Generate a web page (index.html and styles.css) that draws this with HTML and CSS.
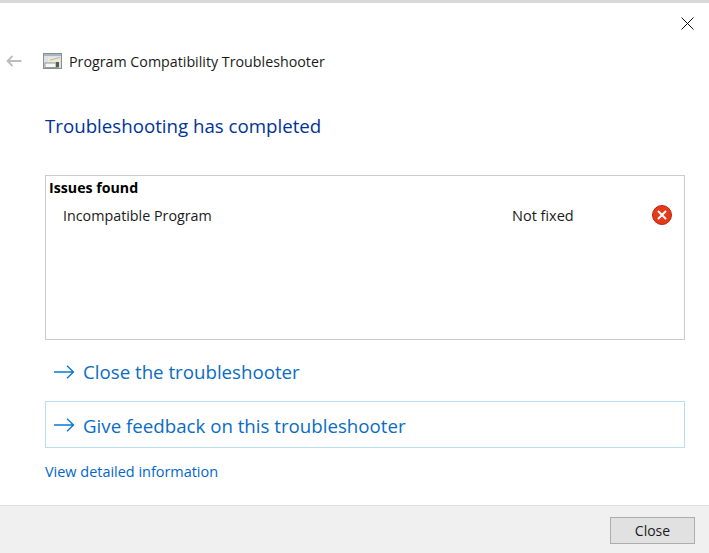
FILE: index.html
```html
<!DOCTYPE html>
<html lang="en">
<head>
    <meta charset="UTF-8">
    <title>Program Compatibility Troubleshooter</title>
    <link rel="stylesheet" href="styles.css">
</head>
<body>
    <div class="window">
        <div class="topbar">
            <svg class="close-x" width="13" height="13" viewBox="0 0 13 13"><path d="M0.5 0.5L12.5 12.5M12.5 0.5L0.5 12.5" stroke="#111" stroke-width="1" fill="none"/></svg>
        </div>
        <div class="titlebar">
            <svg class="back" width="16" height="12" viewBox="0 0 16 12"><path d="M15.5 6H1.5M6.5 1L1.5 6L6.5 11" stroke="#bcbcbc" stroke-width="1.8" fill="none"/></svg>
            <svg class="app-icon" width="19" height="16" viewBox="0 0 19 16">
                <rect x="0.5" y="0.5" width="18" height="15" fill="#dde1e8" stroke="#8d8d8d"/>
                <rect x="1" y="1" width="17" height="2" fill="#a9b4c6"/>
                <path d="M5 4H17V9H5Z" fill="#efe9d2"/>
                <path d="M7 7L17 4.5" stroke="#b4b9c4" stroke-width="1.2"/>
                <rect x="2" y="10" width="11" height="4.5" fill="#f7f7f7" stroke="#7d8a7f" stroke-width="0.8"/>
                <rect x="13" y="9" width="3" height="5.5" fill="#5a5f4c"/>
            </svg>
            <span class="app-name">Program Compatibility Troubleshooter</span>
        </div>
        <main class="content">
            <h1>Troubleshooting has completed</h1>
            <section class="issues">
                <div class="issues-head">Issues found</div>
                <div class="issue-row">
                    <span class="issue-name">Incompatible Program</span>
                    <span class="issue-status">Not fixed</span>
                    <svg class="issue-icon" width="20" height="20" viewBox="0 0 20 20">
                        <circle cx="10" cy="10" r="9.5" fill="#e5391a" stroke="#b5280f" stroke-width="1"/>
                        <path d="M6 6L14 14M14 6L6 14" stroke="#fff" stroke-width="2" fill="none"/>
                    </svg>
                </div>
            </section>
            <a class="task" href="#">
                <svg width="21" height="14" viewBox="0 0 21 14"><path d="M0 7H19.5M13 0.7L19.5 7L13 13.3" stroke="#0a78d7" stroke-width="1.4" fill="none"/></svg>
                Close the troubleshooter
            </a>
            <a class="task task-focus" href="#">
                <svg width="21" height="14" viewBox="0 0 21 14"><path d="M0 7H19.5M13 0.7L19.5 7L13 13.3" stroke="#0a78d7" stroke-width="1.4" fill="none"/></svg>
                Give feedback on this troubleshooter
            </a>
            <a class="details" href="#">View detailed information</a>
        </main>
        <footer class="footer">
            <button class="close-btn">Close</button>
        </footer>
    </div>
</body>
</html>
```

FILE: styles.css
```css
body {
    margin: 0;
    font-family: "Open Sans", "Noto Sans", sans-serif;
    background: #fff;
    overflow: hidden;
}
.window {
    height: 553px;
    display: flex;
    flex-direction: column;
    border-top: 3px solid #d9d9d9;
    box-sizing: border-box;
}
.topbar {
    height: 39px;
    display: flex;
    justify-content: flex-end;
    align-items: flex-start;
    padding: 14px 15px 0 0;
    box-sizing: border-box;
}
.titlebar {
    height: 38px;
    display: flex;
    align-items: center;
    padding-left: 6px;
}
.back {
    margin-right: 21px;
}
.app-icon {
    margin-right: 7px;
}
.app-name {
    font-size: 14.25px;
    color: #1a1a1a;
}
.content {
    flex: 1;
    padding: 0 24px 0 45px;
}
h1 {
    margin: 32px 0 0;
    height: 63px;
    font-size: 18.7px;
    line-height: 28px;
    font-weight: 400;
    color: #003399;
}
.issues {
    height: 165px;
    border: 1px solid #ccc;
    box-sizing: border-box;
    margin-bottom: 8px;
}
.issues-head {
    font-size: 14.2px;
    font-weight: 700;
    color: #000;
    padding: 2px 0 0 3px;
    line-height: 20px;
}
.issue-row {
    display: flex;
    align-items: center;
    height: 34px;
    font-size: 14.3px;
    color: #1a1a1a;
    padding: 0 12px 0 17px;
}
.issue-name {
    width: 449px;
}
.issue-status {
    flex: 1;
    font-size: 14.5px;
}
.task {
    display: flex;
    align-items: center;
    gap: 8px;
    height: 47px;
    padding-left: 8px;
    font-size: 18.7px;
    color: #0a6cc4;
    text-decoration: none;
    border: 1px solid transparent;
    box-sizing: border-box;
}
.task-focus {
    border-color: #bcdcf4;
    margin-top: 6px;
    padding-top: 1px;
}
.details {
    display: block;
    margin-top: 14px;
    font-size: 14.45px;
    line-height: 20px;
    color: #0066cc;
    text-decoration: none;
}
.footer {
    height: 48px;
    background: #f0f0f0;
    border-top: 1px solid #dfdfdf;
    display: flex;
    justify-content: flex-end;
    align-items: flex-start;
    padding: 11px 14px 0 0;
    box-sizing: border-box;
}
.close-btn {
    width: 85px;
    height: 27px;
    background: #e1e1e1;
    border: 1px solid #adadad;
    font-family: inherit;
    font-size: 14px;
    color: #1a1a1a;
    padding: 0;
}
```
